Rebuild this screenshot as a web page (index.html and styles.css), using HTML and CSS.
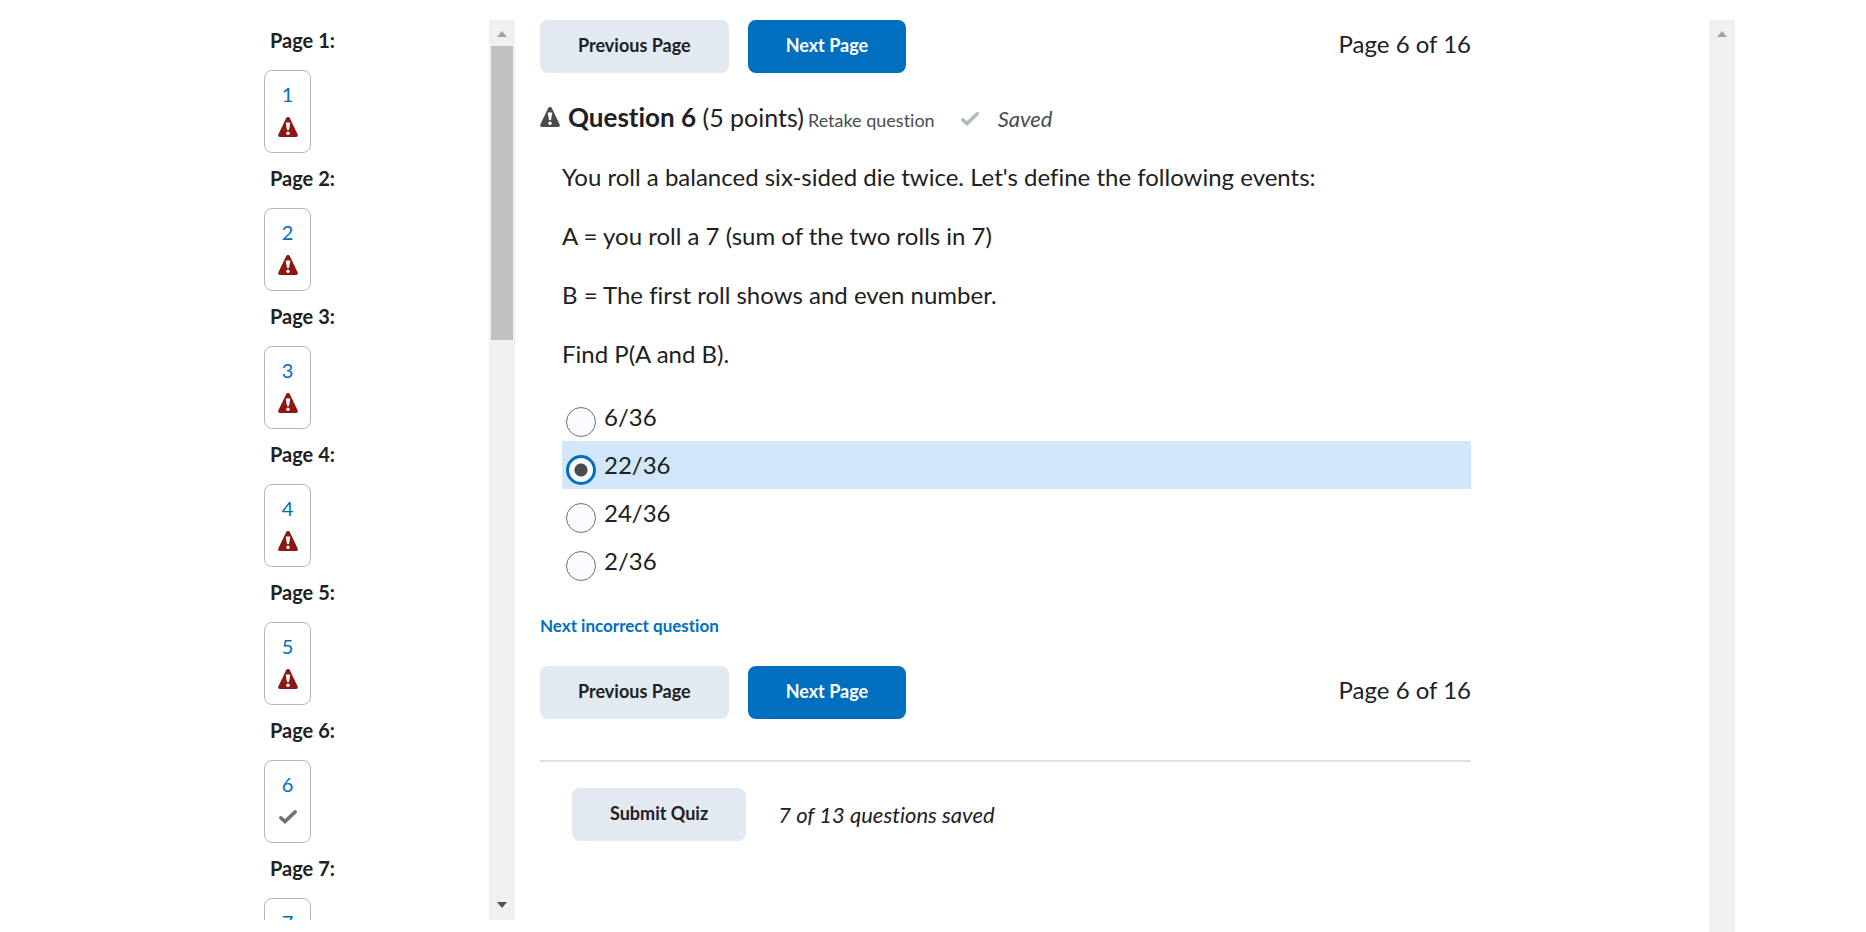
FILE: index.html
```html
<!DOCTYPE html>
<html lang="en">
<head>
<meta charset="utf-8">
<title>Quiz - Question 6</title>
<link rel="stylesheet" href="styles.css">
</head>
<body>
<svg class="defs" aria-hidden="true">
  <symbol id="warning" viewBox="0 0 20 20">
    <path fill="currentColor" d="M10 0C10.900 0 11.500.5 11.900 1.200L19.600 17.300C20.200 18.700 19.600 20 18.200 20H1.800C.4 20-.2 18.700.4 17.300L8.100 1.200C8.500.5 9.100 0 10 0Z"/>
    <path fill="#fff" d="M8.200 5.500H11.800C12.200 5.500 12.300 5.800 12.200 6.200L11.100 12.500C10.900 13.500 9.100 13.500 8.900 12.500L7.800 6.200C7.700 5.800 7.800 5.500 8.200 5.500Z"/>
    <circle fill="#fff" cx="10" cy="16.300" r="1.700"/>
  </symbol>
  <symbol id="check" viewBox="0 0 20 16">
    <path fill="none" stroke="currentColor" stroke-width="3.600" stroke-linecap="round" stroke-linejoin="miter" d="M2.800 8.800L7 12.500L17.200 2.800"/>
  </symbol>
</svg>
<div class="quiz">
  <div class="sidebar">
    <nav class="pages" aria-label="Quiz pages">
      <section class="page"><h2 class="page-title">Page 1:</h2><a class="tile" href="#q1">1<svg class="icon alert"><use href="#warning"/></svg></a></section>
      <section class="page"><h2 class="page-title">Page 2:</h2><a class="tile" href="#q2">2<svg class="icon alert"><use href="#warning"/></svg></a></section>
      <section class="page"><h2 class="page-title">Page 3:</h2><a class="tile" href="#q3">3<svg class="icon alert"><use href="#warning"/></svg></a></section>
      <section class="page"><h2 class="page-title">Page 4:</h2><a class="tile" href="#q4">4<svg class="icon alert"><use href="#warning"/></svg></a></section>
      <section class="page"><h2 class="page-title">Page 5:</h2><a class="tile" href="#q5">5<svg class="icon alert"><use href="#warning"/></svg></a></section>
      <section class="page"><h2 class="page-title">Page 6:</h2><a class="tile" href="#q6">6<svg class="icon done"><use href="#check"/></svg></a></section>
      <section class="page"><h2 class="page-title">Page 7:</h2><a class="tile" href="#q7">7</a></section>
    </nav>
    <div class="scrollbar" aria-hidden="true">
      <svg class="arrow arrow-up" viewBox="0 0 10 6"><path d="M5 0L10 6H0Z"/></svg>
      <div class="thumb"></div>
      <svg class="arrow arrow-down" viewBox="0 0 10 6"><path d="M0 0H10L5 6Z"/></svg>
    </div>
  </div>
  <main class="content">
    <div class="pager">
      <button class="button" type="button">Previous Page</button>
      <button class="button primary" type="button">Next Page</button>
      <span class="position">Page 6 of 16</span>
    </div>
    <div class="question-header">
      <svg class="icon notice"><use href="#warning"/></svg>
      <h1 class="question-title"><strong>Question 6</strong> (5 points)</h1>
      <span class="retake">Retake question</span>
      <svg class="icon saved-icon"><use href="#check"/></svg>
      <em class="saved">Saved</em>
    </div>
    <div class="question">
      <p>You roll a balanced six-sided die twice. Let's define the following events:</p>
      <p>A = you roll a 7 (sum of the two rolls in 7)</p>
      <p>B = The first roll shows and even number.</p>
      <p>Find P(A and B).</p>
      <div class="options" role="radiogroup" aria-label="Answer">
        <label class="option"><input class="radio" type="radio" name="answer">6/36</label>
        <label class="option selected"><input class="radio" type="radio" name="answer" checked>22/36</label>
        <label class="option"><input class="radio" type="radio" name="answer">24/36</label>
        <label class="option"><input class="radio" type="radio" name="answer">2/36</label>
      </div>
    </div>
    <a class="next-incorrect" href="#next">Next incorrect question</a>
    <div class="pager">
      <button class="button" type="button">Previous Page</button>
      <button class="button primary" type="button">Next Page</button>
      <span class="position">Page 6 of 16</span>
    </div>
    <div class="submit">
      <button class="button" type="button">Submit Quiz</button>
      <em class="progress">7 of 13 questions saved</em>
    </div>
  </main>
  <div class="scrollbar outer" aria-hidden="true">
    <svg class="arrow arrow-up" viewBox="0 0 10 6"><path d="M5 0L10 6H0Z"/></svg>
  </div>
</div>
</body>
</html>
```
FILE: styles.css
```css
* { box-sizing: border-box; }
body {
  margin: 0;
  background: #fff;
  color: #202122;
  font-family: Lato, "Liberation Sans", sans-serif;
  font-size: 24px;
  font-variant-ligatures: none;
}
.defs { position: absolute; width: 0; height: 0; }
.icon { display: block; width: 20px; height: 20px; flex: none; }
.quiz {
  display: flex;
  height: 100vh;
  padding: 20px 131px 0 264px;
  overflow: hidden;
}
.sidebar {
  display: flex;
  justify-content: space-between;
  flex: none;
  width: 251px;
  height: calc(100vh - 32px);
  overflow: hidden;
}
.page { height: 138px; }
.page-title {
  margin: 0;
  padding: 8px 0 18px 6px;
  font-size: 20px;
  line-height: 24px;
  font-weight: 700;
}
.tile {
  display: flex;
  flex-direction: column;
  align-items: center;
  gap: 10px;
  width: 47px;
  height: 83px;
  padding-top: 10px;
  border: 1px solid #b1b9be;
  border-radius: 8px;
  color: #006fbf;
  font-size: 20px;
  line-height: 26px;
  text-decoration: none;
}
.alert { color: #8b1812; }
.done { color: #6e7376; }
.scrollbar {
  display: flex;
  flex-direction: column;
  align-items: center;
  flex: none;
  width: 26px;
  background: #f0f0f0;
}
.arrow { width: 10px; height: 6px; }
.arrow-up { margin: 11px 0 9px; fill: #a3a3a3; }
.arrow-down { margin: auto 0 12px; fill: #505050; }
.thumb { width: 22px; height: 294px; background: #c1c1c1; }
.content { flex: 1; margin: 0 238px 0 25px; }
.pager { display: flex; align-items: center; gap: 19px; }
.button {
  height: 53px;
  padding: 0 38px 4px;
  border: 0;
  border-radius: 8px;
  background: #e3e9f1;
  color: #202122;
  font-family: inherit;
  font-size: 18px;
  font-weight: 700;
}
.primary { background: #006fbf; color: #fff; }
.position { margin-left: auto; padding-bottom: 7px; }
.question-header {
  display: flex;
  align-items: baseline;
  margin-top: 26px;
  line-height: 36px;
}
.notice { margin-right: 8px; color: #494c4e; }
.question-title { margin: 0; font-size: 25px; font-weight: 400; }
.question-title strong { font-size: 26px; }
.retake { margin-left: 4px; color: #494c4e; font-size: 18px; }
.saved-icon { width: 20px; height: 16px; margin: 0 18px 0 25px; color: #b1b9be; }
.saved { color: #494c4e; font-size: 22px; }
.question { margin-top: -3px; padding-left: 22px; }
.question p { margin: 0; padding-top: 24px; line-height: 35px; }
.options { margin-top: 22px; }
.option {
  display: flex;
  gap: 8px;
  height: 48px;
  padding-left: 4px;
  line-height: 48px;
}
.selected { background: #d2e7fa; }
.radio {
  appearance: none;
  width: 30px;
  height: 30px;
  margin: 14px 0 0;
  border: 1px solid #6e7376;
  border-radius: 50%;
  background: #f9fbff;
}
.radio:checked {
  border: 3px solid #006fbf;
  background: radial-gradient(circle, #494c4e 6px, #f9fbff 7px);
}
.next-incorrect {
  display: block;
  width: max-content;
  margin: 29px 0 28px;
  color: #006fbf;
  font-size: 17px;
  font-weight: 700;
  line-height: 24px;
  text-decoration: none;
}
.submit {
  display: flex;
  align-items: center;
  gap: 32px;
  margin-top: 41px;
  padding: 26px 0 0 32px;
  border-top: 2px solid #dbe1e5;
}
.progress { font-size: 22px; }
```
